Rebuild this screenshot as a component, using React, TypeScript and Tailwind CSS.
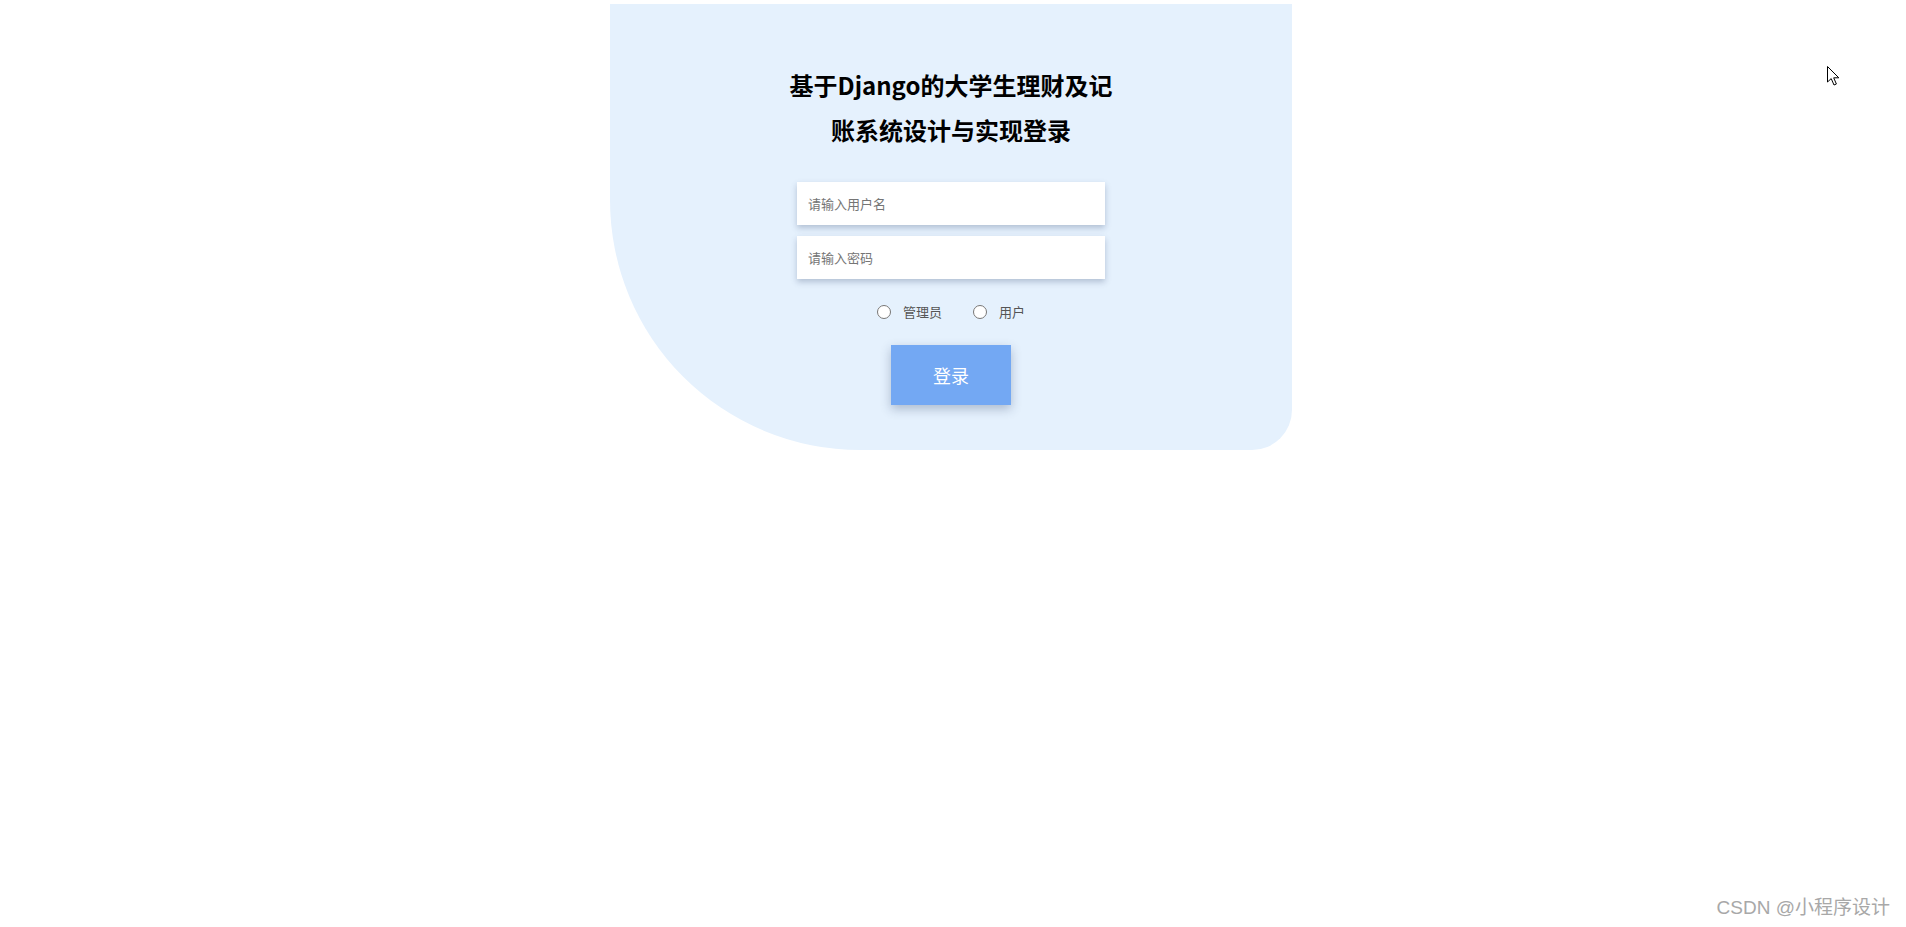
import { useState } from 'react';

const cjk = "font-['Microsoft_YaHei','Noto_Sans_CJK_SC',sans-serif]";

function Cursor() {
  return (
    <svg
      className="pointer-events-none absolute left-[1827px] top-[66px]"
      width="13"
      height="20"
      viewBox="0 0 13 20"
    >
      <path
        d="M0.5 0.5 L0.5 16 L4.2 12.6 L7 19 L9.4 18 L6.7 11.8 L11.8 11.8 Z"
        fill="#fff"
        stroke="#000"
        strokeWidth="1"
        strokeLinejoin="round"
      />
    </svg>
  );
}

export default function App() {
  const [username, setUsername] = useState('');
  const [password, setPassword] = useState('');
  const [role, setRole] = useState('');

  return (
    <div className={`relative h-[927px] w-full overflow-hidden bg-white ${cjk}`}>
      <div className="ml-[610px] mt-1 flex h-[446px] w-[682px] flex-col items-center rounded-bl-[250px] rounded-br-[40px] bg-[#e5f1fd] pt-[58px]">
        <h2 className="w-[340px] text-center text-[24px] font-bold leading-[45px] text-black">
          基于Django的大学生理财及记账系统设计与实现登录
        </h2>

        <input
          type="text"
          value={username}
          onChange={(e) => setUsername(e.target.value)}
          placeholder="请输入用户名"
          className="mt-[30px] h-[43px] w-[308px] bg-white px-[11px] text-[13px] text-[#333] shadow-[0_3px_6px_rgba(60,80,120,0.3)] outline-none placeholder:text-[#757575]"
        />
        <input
          type="password"
          value={password}
          onChange={(e) => setPassword(e.target.value)}
          placeholder="请输入密码"
          className="mt-[11px] h-[43px] w-[308px] bg-white px-[11px] text-[13px] text-[#333] shadow-[0_3px_6px_rgba(60,80,120,0.3)] outline-none placeholder:text-[#757575]"
        />

        <div className="mt-[23px] flex h-[20px] items-center gap-[31px] text-[13px] text-[#555]">
          <label className="flex items-center gap-[12px]">
            <input
              type="radio"
              name="role"
              checked={role === 'admin'}
              onChange={() => setRole('admin')}
              className="m-0 h-[14px] w-[14px]"
            />
            管理员
          </label>
          <label className="flex items-center gap-[12px]">
            <input
              type="radio"
              name="role"
              checked={role === 'user'}
              onChange={() => setRole('user')}
              className="m-0 h-[14px] w-[14px]"
            />
            用户
          </label>
        </div>

        <button
          type="button"
          className="mt-[23px] h-[60px] w-[120px] bg-[#73a8f3] text-[18px] text-white shadow-[0_4px_10px_rgba(40,60,100,0.3)]"
        >
          登录
        </button>
      </div>

      <div className="absolute bottom-[5px] right-[16px] font-['Liberation_Sans','Noto_Sans_CJK_SC',sans-serif] text-[19px] text-[#a8a8a8] [text-shadow:0_0_1px_#fff]">
        CSDN @小程序设计
      </div>

      <Cursor />
    </div>
  );
}
